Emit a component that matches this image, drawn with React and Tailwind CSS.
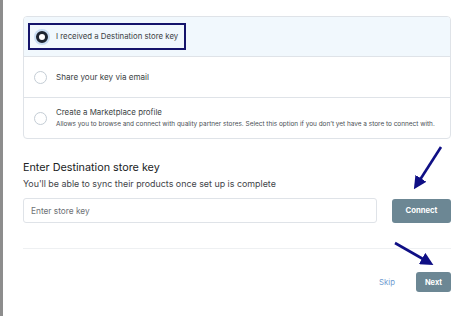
export default function App() {
  return (
    <div className="relative flex h-[316px] w-[474px] overflow-hidden bg-white font-['Inter',sans-serif] text-[#202223]">
      <div className="w-[3px] shrink-0 bg-[#8d8d8d]" />
      <div className="w-[471px] shrink-0 pl-[20px] pr-[23px] pt-[16px]">
        <div className="overflow-hidden rounded-[4px] border border-[#dfe3e8]">
          <div className="flex h-[40px] items-center border-b border-[#dfe3e8] bg-[#f1f8fd] pl-[4px]">
            <div className="flex h-[27px] w-[158px] items-center gap-[8px] border-2 border-[#15146b] pl-[6px]">
              <span className="h-[12px] w-[12px] rounded-full border-[3px] border-[#1c2430] bg-white ring-[2px] ring-[#c9ddf2]" />
              <span className="whitespace-nowrap text-[7.8px] text-[#3b3f44]">I received a Destination store key</span>
            </div>
          </div>
          <div className="flex h-[41px] items-center gap-[9px] border-b border-[#dfe3e8] pl-[10px]">
            <span className="h-[13px] w-[13px] rounded-full border border-[#c4cdd5] bg-white" />
            <span className="text-[8.1px] text-[#3b3f44]">Share your key via email</span>
          </div>
          <div className="flex h-[40px] items-center gap-[9px] pl-[10px]">
            <span className="h-[13px] w-[13px] shrink-0 rounded-full border border-[#c4cdd5] bg-white" />
            <div className="flex min-w-0 flex-col leading-tight">
              <span className="text-[7.9px] text-[#3b3f44]">Create a Marketplace profile</span>
              <span className="mt-[3px] whitespace-nowrap text-[6.45px] text-[#4a4f55]">
                Allows you to browse and connect with quality partner stores. Select this option if you don’t yet have a store to connect with.
              </span>
            </div>
          </div>
        </div>

        <div className="mt-[22px] text-[10.8px] leading-[14px] text-[#202223]">Enter Destination store key</div>
        <div className="mt-[2px] text-[8.9px] text-[#3f4449]">You'll be able to sync their products once set up is complete</div>

        <div className="mt-[8px] flex items-center">
          <div className="flex h-[25px] w-[354px] items-center rounded-[3px] border border-[#dfe3e8] pl-[7px] text-[8.3px] text-[#6d7175]">
            Enter store key
          </div>
          <div className="ml-auto flex h-[24px] w-[59px] items-center justify-center rounded-[3px] bg-[#6c8794] text-[7.7px] font-bold text-white">
            Connect
          </div>
        </div>

        <div className="mt-[25px] border-t border-[#eef0f2]" />

        <div className="mt-[23px] flex items-center justify-end">
          <span className="mr-[21px] text-[7.8px] text-[#6f9bd1]">Skip</span>
          <div className="flex h-[20px] w-[35px] items-center justify-center rounded-[3px] bg-[#6c8794] text-[7.5px] font-bold text-white">
            Next
          </div>
        </div>
      </div>

      <svg className="absolute left-0 top-0" width="474" height="316" viewBox="0 0 474 316">
        <defs>
          <marker id="ah" markerWidth="5" markerHeight="5" refX="3.5" refY="2.5" orient="auto" markerUnits="strokeWidth">
            <path d="M0,0 L5,2.5 L0,5 z" fill="#0f0f85" />
          </marker>
        </defs>
        <line x1="441" y1="147" x2="416" y2="186" stroke="#0f0f85" strokeWidth="2.6" markerEnd="url(#ah)" />
        <line x1="395" y1="243" x2="430" y2="263" stroke="#0f0f85" strokeWidth="2.6" markerEnd="url(#ah)" />
      </svg>
    </div>
  );
}
